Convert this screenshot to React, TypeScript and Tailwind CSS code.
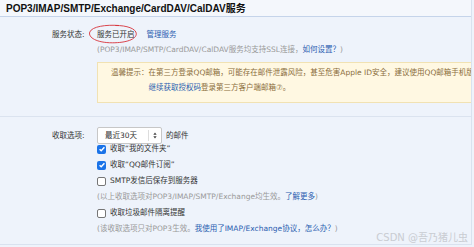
import React from 'react';

const font = { fontFamily: '"DejaVu Sans", "Noto Sans CJK SC", sans-serif' };

function Check({ checked }: { checked?: boolean }) {
  return checked ? (
    <span className="inline-flex h-[9px] w-[9px] items-center justify-center rounded-[2px] bg-[#1a73e8]">
      <svg viewBox="0 0 10 10" className="h-[8px] w-[8px]" fill="none" stroke="#fff" strokeWidth={1.8}>
        <path d="M2 5.2l2 2 4-4.4" />
      </svg>
    </span>
  ) : (
    <span className="inline-block h-[9px] w-[9px] rounded-[2px] border border-[#767676] bg-white" />
  );
}

export default function App() {
  return (
    <div className="h-[247px] w-[474px] overflow-hidden bg-[#eef3fb] text-[7.5px] text-[#333]" style={font}>
      <div className="h-[245px] w-[472px] overflow-hidden border-r border-b border-[#d9e2ef]">
        <div
          className="flex h-[17px] items-center border-b border-[#c5d4ea] bg-[#f4f7fc] pl-[6px] text-[10px] font-bold text-[#111]"
          style={{ fontFamily: '"Liberation Sans", "Noto Sans CJK SC", sans-serif' }}
        >
          POP3/IMAP/SMTP/Exchange/CardDAV/CalDAV服务
        </div>

        <div className="pt-[12px]">
          <div className="flex">
            <div className="w-[97px] shrink-0 whitespace-nowrap pl-[52px]">
              <div className="flex h-[12px] items-center">服务状态:</div>
            </div>
            <div className="min-w-0 flex-1">
              <div className="flex h-[12px] items-center gap-[12px]">
                <span className="relative">
                  服务已开启
                  <svg className="absolute left-[-9px] top-[-5px] h-[20px] w-[50px]" viewBox="0 0 50 20" fill="none" stroke="#d7323a" strokeWidth={0.9}>
                    <path d="M31 1.5C18 0.5 4 2.5 1.8 8c-2 5.5 7 10.8 22.5 10.8 14 0 24-3.5 24-9 0-5-9.5-8.5-21-8.3" />
                  </svg>
                </span>
                <span className="text-[#2a5db0]">管理服务</span>
              </div>
              <div className="mt-[3px] flex h-[12px] items-center whitespace-nowrap text-[#999]">
                (POP3/IMAP/SMTP/CardDAV/CalDAV服务均支持SSL连接，<span className="text-[#2a5db0]">如何设置？</span>)
              </div>
              <div className="mt-[6px] w-[400px] border border-[#f1e2b3] bg-[#fff8e2] pl-[13px] pt-[2px] pb-[7px] text-[#8a6d3b]">
                <div className="flex">
                  <span className="flex h-[15px] shrink-0 items-center">温馨提示：</span>
                  <div>
                    <div className="flex h-[15px] items-center whitespace-nowrap">
                      在第三方登录QQ邮箱，可能存在邮件泄露风险，甚至危害Apple ID安全，建议使用QQ邮箱手机版登录
                    </div>
                    <div className="flex h-[15px] items-center whitespace-nowrap">
                      <span className="text-[#2a5db0]">继续获取授权码</span>登录第三方客户端邮箱⑦。
                    </div>
                  </div>
                </div>
              </div>
            </div>
          </div>

          <div className="mt-[13px] border-t border-[#dbe3ef]" />

          <div className="flex pt-[10px]">
            <div className="w-[97px] shrink-0 whitespace-nowrap pl-[52px]">
              <div className="flex h-[17px] items-center">收取选项:</div>
            </div>
            <div className="min-w-0 flex-1 whitespace-nowrap">
              <div className="flex h-[17px] items-center gap-[4px]">
                <div className="flex h-[17px] w-[65px] items-center rounded-[2px] border border-[#c7c7c7] bg-white">
                  <span className="flex-1 pl-[7px]">最近30天</span>
                  <span className="flex h-[11px] w-[13px] items-center justify-center border-l border-[#ddd]">
                    <svg viewBox="0 0 6 10" className="h-[7px] w-[4px]" fill="#444">
                      <path d="M3 0.5L5.5 4H0.5zM3 9.5L0.5 6h5z" />
                    </svg>
                  </span>
                </div>
                <span>的邮件</span>
              </div>
              <div className="-mt-[3px] flex h-[16px] items-center gap-[4px]">
                <Check checked />
                <span>收取“我的文件夹”</span>
              </div>
              <div className="flex h-[16px] items-center gap-[4px]">
                <Check checked />
                <span>收取“QQ邮件订阅”</span>
              </div>
              <div className="flex h-[16px] items-center gap-[4px]">
                <Check />
                <span>SMTP发信后保存到服务器</span>
              </div>
              <div className="flex h-[16px] items-center text-[#999]">
                (以上收取选项对POP3/IMAP/SMTP/Exchange均生效。<span className="text-[#2a5db0]">了解更多</span>)
              </div>
              <div className="flex h-[16px] items-center gap-[4px]">
                <Check />
                <span>收取垃圾邮件隔离提醒</span>
              </div>
              <div className="flex h-[16px] items-center text-[#999]">
                <span>
                  (该收取选项只对POP3生效。<span className="text-[#2a5db0]">我使用了IMAP/Exchange协议，怎么办？</span>)
                </span>
              </div>
            </div>
          </div>
        </div>
      </div>
      <div className="relative">
        <span className="absolute right-[6px] top-[-15px] text-[10px] text-[#c9ccd2]">CSDN @吾乃猪儿虫</span>
      </div>
    </div>
  );
}
